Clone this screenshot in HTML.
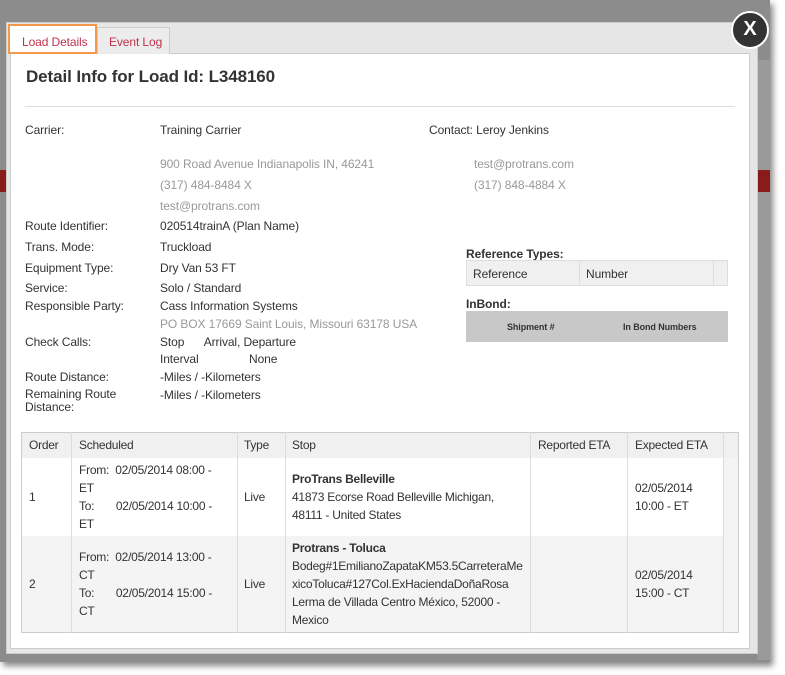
<!DOCTYPE html>
<html><head><meta charset="utf-8"><style>
*{margin:0;padding:0;box-sizing:border-box}
body{width:785px;height:675px;background:#fff;font-family:"Liberation Sans",Arial,sans-serif;font-size:12px;color:#333;position:relative;overflow:hidden;letter-spacing:-0.1px}
.a{position:absolute;white-space:nowrap}
.g{color:#999}
table{border-collapse:collapse;letter-spacing:-0.25px}
</style></head><body>
<div class="a" style="left:0;top:0;width:770px;height:662px;background:#8c8c8c;box-shadow:3px 4px 6px #888"></div>
<div class="a" style="left:757px;top:60px;width:13px;height:600px;background:#9a9a9a"></div>
<div class="a" style="left:757px;top:170px;width:13px;height:22px;background:#8b1a1a"></div>
<div class="a" style="left:0;top:170px;width:6px;height:22px;background:#8b1a1a"></div>
<div class="a" style="left:6px;top:22px;width:752px;height:632px;background:#e6e6e6;border:1px solid #ccc"></div>
<div class="a" style="left:10px;top:53px;width:740px;height:596px;background:#fff;border:1px solid #ccc"></div>
<div class="a" style="left:97px;top:27px;width:73px;height:27px;background:#ececec;border:1px solid #ccc;border-bottom:none;color:#c0334d;padding:7px 0 0 11px">Event Log</div>
<div class="a" style="left:8px;top:24px;width:89px;height:30px;background:#fff;border:2px solid #f39a4a;color:#c0334d;padding:9px 0 0 12px">Load Details</div>
<div class="a" style="left:731px;top:11px;width:38px;height:38px;border-radius:50%;background:#333;border:2px solid #fff;color:#fff;font-weight:bold;font-size:20px;text-align:center;line-height:33px">X</div>
<div class="a" style="left:26px;top:67px;font-size:17px;font-weight:bold;color:#333">Detail Info for Load Id: L348160</div>
<div class="a" style="left:25px;top:106px;width:710px;height:1px;background:#ddd"></div>
<div class="a" style="left:25px;top:123px">Carrier:</div>
<div class="a" style="left:160px;top:123px">Training Carrier</div>
<div class="a g" style="left:160px;top:157px">900 Road Avenue Indianapolis IN, 46241</div>
<div class="a g" style="left:160px;top:178px">(317) 484-8484 X</div>
<div class="a g" style="left:160px;top:199px">test@protrans.com</div>
<div class="a" style="left:429px;top:123px">Contact: Leroy Jenkins</div>
<div class="a g" style="left:474px;top:157px">test@protrans.com</div>
<div class="a g" style="left:474px;top:178px">(317) 848-4884 X</div>
<div class="a" style="left:25px;top:219px">Route Identifier:</div><div class="a" style="left:160px;top:219px">020514trainA (Plan Name)</div>
<div class="a" style="left:25px;top:240px">Trans. Mode:</div><div class="a" style="left:160px;top:240px">Truckload</div>
<div class="a" style="left:25px;top:261px">Equipment Type:</div><div class="a" style="left:160px;top:261px">Dry Van 53 FT</div>
<div class="a" style="left:25px;top:281px">Service:</div><div class="a" style="left:160px;top:281px">Solo / Standard</div>
<div class="a" style="left:25px;top:299px">Responsible Party:</div><div class="a" style="left:160px;top:299px">Cass Information Systems</div>
<div class="a g" style="left:160px;top:317px">PO BOX 17669 Saint Louis, Missouri 63178 USA</div>
<div class="a" style="left:25px;top:335px">Check Calls:</div><div class="a" style="left:160px;top:335px">Stop&nbsp;&nbsp;&nbsp;&nbsp;&nbsp;&nbsp;Arrival, Departure</div>
<div class="a" style="left:160px;top:352px">Interval</div><div class="a" style="left:249px;top:352px">None</div>
<div class="a" style="left:25px;top:370px">Route Distance:</div><div class="a" style="left:160px;top:370px">-Miles / -Kilometers</div>
<div class="a" style="left:25px;top:388px;line-height:13px">Remaining Route<br>Distance:</div><div class="a" style="left:160px;top:388px">-Miles / -Kilometers</div>
<div class="a" style="left:466px;top:247px;font-weight:bold">Reference Types:</div>
<div class="a" style="left:466px;top:260px;width:262px;height:26px;background:#f0f0f0;border:1px solid #ddd"></div>
<div class="a" style="left:579px;top:261px;width:1px;height:24px;background:#ddd"></div>
<div class="a" style="left:713px;top:261px;width:1px;height:24px;background:#ddd"></div>
<div class="a" style="left:473px;top:267px">Reference</div><div class="a" style="left:586px;top:267px">Number</div>
<div class="a" style="left:466px;top:297px;font-weight:bold">InBond:</div>
<div class="a" style="left:466px;top:311px;width:262px;height:31px;background:#c8c8c8"></div>
<div class="a" style="left:507px;top:322px;font-size:9px;font-weight:bold">Shipment #</div>
<div class="a" style="left:623px;top:322px;font-size:9px;font-weight:bold">In Bond Numbers</div>
<table class="a" style="left:21px;top:432px;width:718px;border:1px solid #ccc;line-height:18px">
<tr style="background:#f0f0f0;height:25px"><td style="width:50px;padding-left:7px;border-right:1px solid #ddd">Order</td><td style="width:166px;padding-left:7px;border-right:1px solid #ddd">Scheduled</td><td style="width:48px;padding-left:6px;border-right:1px solid #ddd">Type</td><td style="width:245px;padding-left:6px;border-right:1px solid #ddd">Stop</td><td style="width:97px;padding-left:7px;border-right:1px solid #ddd">Reported ETA</td><td style="width:96px;padding-left:7px;border-right:1px solid #ddd">Expected ETA</td><td></td></tr>
<tr style="height:78px;background:#fff"><td style="padding-left:7px;border-right:1px solid #ddd">1</td><td style="padding-left:7px;border-right:1px solid #ddd">From:&nbsp; 02/05/2014 08:00 -<br>ET<br>To:&nbsp;&nbsp;&nbsp;&nbsp;&nbsp;&nbsp; 02/05/2014 10:00 -<br>ET</td><td style="padding-left:6px;border-right:1px solid #ddd">Live</td><td style="padding-left:6px;border-right:1px solid #ddd"><b>ProTrans Belleville</b><br>41873 Ecorse Road Belleville Michigan,<br>48111 - United States</td><td style="border-right:1px solid #ddd"></td><td style="padding-left:7px;border-right:1px solid #ddd">02/05/2014<br>10:00 - ET</td><td style="background:#f4f4f4"></td></tr>
<tr style="height:97px;background:#f4f4f4"><td style="padding-left:7px;border-right:1px solid #ddd">2</td><td style="padding-left:7px;border-right:1px solid #ddd">From:&nbsp; 02/05/2014 13:00 -<br>CT<br>To:&nbsp;&nbsp;&nbsp;&nbsp;&nbsp;&nbsp; 02/05/2014 15:00 -<br>CT</td><td style="padding-left:6px;border-right:1px solid #ddd">Live</td><td style="padding-left:6px;border-right:1px solid #ddd"><b>Protrans - Toluca</b><br>Bodeg#1EmilianoZapataKM53.5CarreteraMe<br>xicoToluca#127Col.ExHaciendaDoñaRosa<br>Lerma de Villada Centro México, 52000 -<br>Mexico</td><td style="border-right:1px solid #ddd"></td><td style="padding-left:7px;border-right:1px solid #ddd">02/05/2014<br>15:00 - CT</td><td></td></tr>
</table>
</body></html>
